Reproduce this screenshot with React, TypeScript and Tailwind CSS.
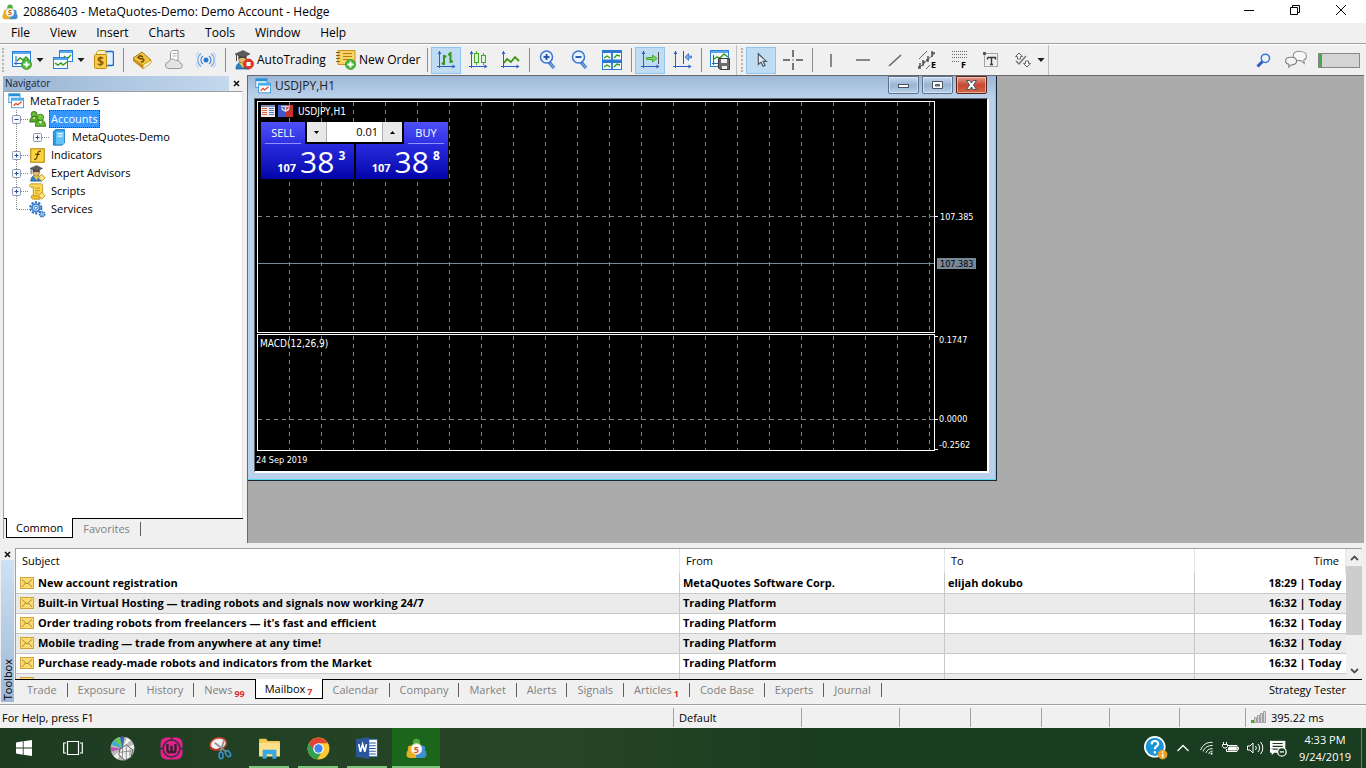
import { useState } from "react";
import type { ReactNode } from "react";
import clsx from "clsx";

const blue = "#2a5fc4";
const green = "#3a9a12";

function Svg({ size = 20, children }: { size?: number; children: ReactNode }) {
  return (
    <svg width={size} height={size} viewBox="0 0 20 20" fill="none" className="shrink-0" aria-hidden="true">
      {children}
    </svg>
  );
}

/* ---------- shared artwork ---------- */

function LogoIcon({ size = 16 }: { size?: number }) {
  return (
    <Svg size={size}>
      <circle cx="10" cy="4" r="3.4" fill="#4cae3c" />
      <path d="M4 12C4 7 7 4.500 10 4.500S16 7 16 12" fill="#58b848" />
      <circle cx="4.500" cy="10" r="2.800" fill="#e8b020" />
      <path d="M.5 16c0-4 2-6 5-6s5 3 5 9H4c-2.500 0-3.500-1-3.500-3z" fill="#e8b020" />
      <circle cx="15.500" cy="10" r="2.800" fill="#3f8fd0" />
      <path d="M19.500 16c0-4-2-6-5-6s-5 3-5 9H16c2.500 0 3.500-1 3.500-3z" fill="#3f8fd0" />
      <circle cx="10" cy="10.500" r="5" fill="#fff" stroke="#e8dcc8" />
      <text x="10" y="14" textAnchor="middle" fontSize="9" fontWeight="700" fill="#d4541c">5</text>
    </Svg>
  );
}

function ChartWindowsIcon({ size = 16 }: { size?: number }) {
  return (
    <Svg size={size}>
      <rect x="1" y="1" width="14" height="11" fill="#eaf6ff" stroke="#2a90d8" />
      <rect x="1" y="1" width="14" height="3" fill="#2a90d8" />
      <rect x="4.500" y="6.500" width="15" height="12" fill="#fff" stroke="#2a90d8" />
      <rect x="4.500" y="6.500" width="15" height="3" fill="#42aef0" />
      <path d="M7 16l3-3 2 2 5-4" stroke="#e04a20" strokeWidth="1.600" />
    </Svg>
  );
}

function GraduateIcon({ size = 20, badge }: { size?: number; badge: "stop" | "diamond" }) {
  return (
    <Svg size={size}>
      <path d="M2 19c0-5 3-7 6.500-7s6.500 2 6.500 7z" fill="#2f7fc8" stroke="#1e5890" strokeWidth=".7" />
      <path d="M5 13l4 5 3-5z" fill="#e8c050" />
      <circle cx="8.500" cy="9" r="4" fill="#e8b868" stroke="#8a6020" strokeWidth=".5" />
      <path d="M4.500 5v4c2-1.500 6-1.500 8 0V5z" fill="#484848" />
      <path d="M1 4l8-3.500L16 4l-7 3.500z" fill="#5c5c5c" stroke="#333" strokeWidth=".5" />
      <path d="M2.500 5v6" stroke="#444" />
      {badge === "stop" ? (
        <>
          <circle cx="14.500" cy="14" r="5" fill="#e03a26" stroke="#a82010" strokeWidth=".6" />
          <rect x="12.500" y="12" width="4" height="4" fill="#fff" />
        </>
      ) : (
        <path d="M15 11l4 4-4 4-4-4z" fill="#ffe680" stroke="#b08a10" />
      )}
    </Svg>
  );
}

function MailIcon() {
  return (
    <svg width="14" height="12" viewBox="0 0 14 12" className="shrink-0" aria-hidden="true">
      <rect x=".5" y=".5" width="13" height="11" fill="#fbdc72" stroke="#d0a438" />
      <path d="M2 2.500l5 4.500 5-4.500M2 10l3.500-4M12 10L8.500 6" fill="none" stroke="#b08828" />
    </svg>
  );
}

const axes = (
  <>
    <path d="M3.500 1v17M1 16.500h18" stroke={blue} />
    <path d="M1.500 4l2-3 2 3zM16.500 14.500l3 2-3 2z" fill={blue} />
  </>
);

const plusBadge = (
  <>
    <circle cx="14.500" cy="14.500" r="5" fill="#4cb83c" stroke="#2c8820" strokeWidth=".7" />
    <path d="M14.500 11.500v6M11.500 14.500h6" stroke="#fff" strokeWidth="1.800" />
  </>
);

/* ---------- toolbar ---------- */

function Separator() {
  return (
    <div className="flex w-1.5 shrink-0 justify-center">
      <div className="h-6 w-px bg-[#8c8c8c]" />
    </div>
  );
}

function Grip() {
  return <div className="mx-0.5 h-6 w-0.5 shrink-0 border-l-2 border-dotted border-[#b4b4b4]" />;
}

function Caret() {
  return (
    <svg width="8" height="5" viewBox="0 0 8 5" className="shrink-0" aria-hidden="true">
      <path d="M.5 0h7L4 4z" fill="#1a1a1a" />
    </svg>
  );
}

type ToolProps = { label: string; active?: boolean; onClick?: () => void; children: ReactNode };

function Tool({ label, active, onClick, children }: ToolProps) {
  return (
    <button
      type="button"
      aria-label={label}
      aria-pressed={active}
      onClick={onClick}
      className={clsx(
        "mx-px flex h-[27px] w-[30px] shrink-0 items-center justify-center border",
        active ? "border-[#90c4ee] bg-[#c0dcf3]" : "border-transparent",
      )}
    >
      {children}
    </button>
  );
}

function DropTool({ label, children }: { label: string; children: ReactNode }) {
  return (
    <button type="button" aria-label={label} className="flex h-[27px] w-[41px] shrink-0 items-center gap-1 pl-1.5">
      {children}
      <Caret />
    </button>
  );
}

function Toolbar() {
  const [style, setStyle] = useState("bars");
  const [scroll, setScroll] = useState(true);

  return (
    <div className="flex h-[31px] shrink-0 items-center border-t border-white pr-1.5" role="toolbar" aria-label="Standard">
      <Grip />
      <DropTool label="New chart">
        <Svg>
          <rect x=".5" y="1.500" width="18" height="15" fill="#f4fbff" stroke="#2a80d8" />
          <path d="M1 3h17" stroke="#5aa8ec" strokeWidth="2" />
          <path d="M4 6v9M2 13.500h14" stroke={blue} />
          <path d="M5 11l3-3 3 2 3-3 3 3" stroke={green} strokeWidth="1.500" />
          {plusBadge}
        </Svg>
      </DropTool>
      <DropTool label="Profiles">
        <Svg>
          <rect x="6.500" y=".5" width="13" height="11" fill="#f4fbff" stroke="#2a80d8" />
          <path d="M7 2h12" stroke="#5aa8ec" strokeWidth="2" />
          <path d="M11 6l3 3 4-4" stroke={green} strokeWidth="1.500" />
          <rect x=".5" y="7.500" width="14" height="11" fill="#f4fbff" stroke="#2a80d8" />
          <path d="M1 9h13" stroke="#5aa8ec" strokeWidth="2" />
          <path d="M2 13l3 2 3-2 2 2 4-3" stroke={green} strokeWidth="1.500" />
        </Svg>
      </DropTool>
      <Tool label="Market watch">
        <Svg>
          <rect x="7.500" y="1.500" width="12" height="14" rx="1.500" fill="#dff0ff" stroke="#2468c8" strokeWidth="1.500" />
          <path d="M2.500 4.500V2.500l2-2h6l1.500 2v2" fill="#fff0b8" stroke="#c89820" />
          <rect x=".5" y="4.500" width="12" height="14" rx="1" fill="#f8cc48" stroke="#c08c10" />
          <text x="6.500" y="16" textAnchor="middle" fontSize="12" fontWeight="700" fill="#8a5c00">$</text>
        </Svg>
      </Tool>
      <Separator />
      <Tool label="Navigator">
        <Svg>
          <path d="M1 8l9-6 9 8-8 8z" fill="#f0c440" stroke="#a8780c" />
          <path d="M1 8l10 7v4L1 11z" fill="#c89018" />
          <path d="M11 15l8-5v3l-8 6z" fill="#fff4c4" stroke="#a8780c" strokeWidth=".6" />
          <path d="M8 5.500l-2 2 3 1.500c2-1 4 1 2 2.500L9 12M8 5.500l3 1.500" stroke="#6c4800" strokeWidth="1.400" />
        </Svg>
      </Tool>
      <Tool label="Virtual hosting">
        <Svg>
          <path d="M6.500 12V2.500l2-2h5.500V12" fill="#fff" stroke="#989898" />
          <path d="M8.500 3.500h4M8.500 6h4" stroke="#a8a8a8" />
          <path d="M4 18.500a3.300 3.300 0 01.5-6.500 4 4 0 017-1.500 3.500 3.500 0 014.500 2.500 2.800 2.800 0 010 5.500z" fill="#e4e4e4" stroke="#989898" />
        </Svg>
      </Tool>
      <Tool label="Signals">
        <Svg>
          <circle cx="10" cy="10" r="2.500" fill="#2e74d0" />
          <path d="M7 6a5 5 0 000 8M13 6a5 5 0 010 8" stroke="#4a8adc" strokeWidth="1.300" />
          <path d="M5 3.500a8.200 8.200 0 000 13M15 3.500a8.200 8.200 0 010 13" stroke="#78a8e4" strokeWidth="1.200" />
          <path d="M2.800 2a11 11 0 000 16M17.200 2a11 11 0 010 16" stroke="#a8c8ee" />
        </Svg>
      </Tool>
      <Separator />
      <button type="button" className="flex h-[27px] w-[103px] shrink-0 items-center gap-[3px] pl-1.5 whitespace-nowrap">
        <GraduateIcon badge="stop" />
        AutoTrading
      </button>
      <button type="button" className="flex h-[27px] w-[93px] shrink-0 items-center gap-[3px] pl-[5px] whitespace-nowrap">
        <Svg>
          <path d="M2 .5h17v14H2z" fill="#f8d468" stroke="#c8941c" />
          <path d="M7 3.500h9M7 6.500h9M7 9.500h6" stroke="#b07c10" />
          <path d="M0 2.500h4M0 5.500h4M0 8.500h4M0 11.500h4" stroke="#8c6410" />
          {plusBadge}
        </Svg>
        New Order
      </button>
      <Separator />
      <Tool label="Bar chart" active={style === "bars"} onClick={() => setStyle("bars")}>
        <Svg>
          {axes}
          <path d="M8 5v10M5.500 13.500H8M8 6.500h2.500M14.500 2v11M14.500 4.500H12M14.500 11.500H17" stroke="#36941a" strokeWidth="2" />
        </Svg>
      </Tool>
      <Tool label="Candlesticks" active={style === "candles"} onClick={() => setStyle("candles")}>
        <Svg>
          {axes}
          <path d="M8.500 1v14M15.500 3v12" stroke="#48a828" />
          <rect x="6.500" y="3.500" width="4" height="9" fill="#dff8d4" stroke="#48a828" />
          <rect x="13.500" y="5.500" width="4" height="7" fill="#dff8d4" stroke="#48a828" />
        </Svg>
      </Tool>
      <Tool label="Line chart" active={style === "line"} onClick={() => setStyle("line")}>
        <Svg>
          {axes}
          <path d="M4 13l3-4 4 3 4-5 4 4" stroke={green} strokeWidth="1.800" />
        </Svg>
      </Tool>
      <Separator />
      {["Zoom in", "Zoom out"].map((label) => (
        <Tool key={label} label={label}>
          <Svg>
            <path d="M11 12l5 6" stroke="#3a72c8" strokeWidth="3.400" />
            <path d="M12 13l4 5" stroke="#90b8ec" strokeWidth="1.200" />
            <circle cx="8.500" cy="7" r="6" fill="#eaf4ff" stroke="#3a76d0" strokeWidth="1.500" />
            <path d="M5.500 7h6" stroke="#1c4ca4" strokeWidth="1.800" />
            {label === "Zoom in" && <path d="M8.500 4v6" stroke="#1c4ca4" strokeWidth="1.800" />}
          </Svg>
        </Tool>
      ))}
      <Tool label="Tile windows">
        <Svg>
          <rect x=".5" y=".5" width="19" height="19" fill="#f4fbff" stroke="#2a78d0" />
          <path d="M10 1v18M1 10.500h18M1 2h18M1 12h18" stroke="#2a78d0" strokeWidth="1.800" />
          <path d="M2 8l3-2 3 2M12 8l3-3 3 1M2 17l3-2 3 2M12 17l3-3 3 1" stroke={green} strokeWidth="1.400" />
        </Svg>
      </Tool>
      <Separator />
      <Tool label="Auto scroll" active={scroll} onClick={() => setScroll(!scroll)}>
        <Svg>
          {axes}
          <path d="M18.500 2v12" stroke="#505050" />
          <path d="M6.500 7.500h6V5l4.500 3.500-4.500 3.500V9.500h-6z" fill="#7ad860" stroke="#36941a" strokeWidth=".8" />
        </Svg>
      </Tool>
      <Tool label="Chart shift">
        <Svg>
          {axes}
          <path d="M11.500 1v13" stroke="#505050" />
          <path d="M19.500 6h-3V3.500L13 7l3.500 3.500V8h3z" fill="#78b0f0" stroke={blue} strokeWidth=".7" />
        </Svg>
      </Tool>
      <Separator />
      <Tool label="Save template">
        <Svg>
          <rect x=".5" y=".5" width="18" height="16" fill="#f4fbff" stroke="#2a80d8" />
          <path d="M1 2h17" stroke="#5aa8ec" strokeWidth="2" />
          <path d="M3.500 5v10M2 13.500h8" stroke={blue} />
          <path d="M4 9l3-2 3 1 4-4 4 3" stroke={green} strokeWidth="1.500" />
          <path d="M8.500 8.500h11v11H10l-1.500-1.500z" fill="#6c6c6c" stroke="#3c3c3c" />
          <path d="M11 9h6v4h-6zM12 16h5v3h-5z" fill="#f0f0f0" />
        </Svg>
      </Tool>
      <div className="h-full w-px shrink-0 bg-[#c0c0c0]" />
      <div className="w-0.5" />
      <Grip />
      <Tool label="Cursor" active>
        <Svg size={18}>
          <path d="M7 3v12l3-2.500 2.300 4.500 2.200-1-2.200-4.500H16z" fill="#e8eef4" stroke="#505860" strokeWidth="1.300" />
        </Svg>
      </Tool>
      <Tool label="Crosshair">
        <Svg>
          <path d="M10 0v7M10 13v7M0 10h7M13 10h7M9.500 10h1" stroke="#4c4c4c" strokeWidth="1.500" />
        </Svg>
      </Tool>
      <Separator />
      <Tool label="Vertical line"><Svg><path d="M10 4v13" stroke="#585858" strokeWidth="1.400" /></Svg></Tool>
      <Tool label="Horizontal line"><Svg><path d="M3 10h14" stroke="#585858" strokeWidth="1.400" /></Svg></Tool>
      <Tool label="Trend line"><Svg><path d="M4 16L16 5" stroke="#686868" strokeWidth="1.600" /></Svg></Tool>
      <Tool label="Equidistant channel">
        <Svg>
          <path d="M2 9l8-8M1 19L18 3M9 19l4-4" stroke="#686868" />
          <path d="M3 13v6M1 17h2M6 10v6M6 12h2M11 6v6M9 10h2M15 1v6M15 3h3" stroke="#484848" strokeWidth="1.400" />
          <text x="14" y="18" fontSize="9" fontWeight="700" fill="#000">E</text>
        </Svg>
      </Tool>
      <Tool label="Fibonacci retracement">
        <Svg>
          <path d="M3 1.500h15M3 4.500h15M3 7.500h15M3 11.500h7" stroke="#686868" strokeDasharray="1 1" />
          <text x="12" y="18" fontSize="9" fontWeight="700" fill="#000">F</text>
        </Svg>
      </Tool>
      <Tool label="Text">
        <Svg>
          <path d="M3.500 3.500h13v13h-13z" stroke="#585858" strokeDasharray="1 1" />
          <path d="M2 2h3v3H2z" fill="#585858" />
          <path d="M6.500 7.500h8v2M6.500 7.500v2M10.500 7.500V15M9 14.500h3" stroke="#383838" strokeWidth="1.400" />
        </Svg>
      </Tool>
      <DropTool label="Objects">
        <Svg>
          <path d="M6 3l3.500 3.500h-2V9h-3V6.500h-2zM14 17l3.500-3.500h-2V11h-3v2.500h-2z" fill="#fff" stroke="#686868" />
          <path d="M3 11l3 3 7-8" stroke="#787878" strokeWidth="1.500" />
        </Svg>
      </DropTool>
      <div className="h-full w-px shrink-0 bg-[#c0c0c0]" />

      <div className="ml-auto flex items-center">
        <button type="button" aria-label="Search" className="mr-3.5">
          <Svg size={15}>
            <path d="M9 11l-7 7" stroke="#2f5cc0" strokeWidth="4" />
            <circle cx="12.500" cy="7" r="5.500" fill="#eef5ff" stroke="#3f74dc" strokeWidth="2" />
          </Svg>
        </button>
        <button type="button" aria-label="Community chat" className="mr-[11px]">
          <Svg size={22}>
            <path d="M13 2c4 0 6.500 2 6.500 4.500 0 2-1 3-2.500 3.500l.5 3-3-2.500C9 11 7.500 9 7.500 6.500S9.500 2 13 2z" fill="#f8f8f8" stroke="#909090" />
            <path d="M5.500 7.500c3 0 5 1.500 5 3.500s-2 3.500-5 3.500l-2 2v-2.500C1.500 13.500.5 12.500.5 11c0-2 2-3.500 5-3.500z" fill="#f4f4f4" stroke="#808080" />
          </Svg>
        </button>
        <div className="h-[15px] w-[42px] border border-[#888] bg-[#d4d4d4]">
          <div className="h-full w-[3px] bg-[#3fae49]" />
        </div>
      </div>
    </div>
  );
}

/* ---------- navigator ---------- */

function Branch({ box, last, sub }: { box?: "+" | "-"; last?: boolean; sub?: boolean }) {
  return (
    <svg width="20" height="18" viewBox="0 0 20 18" className="shrink-0" aria-hidden="true">
      {!sub && <path d={last ? "M8.500 0v9" : "M8.500 0v18"} stroke="#888" strokeDasharray="1 1" />}
      <path d="M9 9.500h11" stroke="#888" strokeDasharray="1 1" />
      {box && (
        <>
          <rect x="4.500" y="5.500" width="8" height="8" rx="1" fill="#f6f8fc" stroke="#8c98b0" />
          <path d={box === "+" ? "M6.500 9.500h4M8.500 7.500v4" : "M6.500 9.500h4"} stroke="#2c4c90" />
        </>
      )}
    </svg>
  );
}

function AccountsIcon() {
  return (
    <Svg size={17}>
      <circle cx="6" cy="4" r="3.500" fill="#68b838" stroke="#2c7410" />
      <path d="M1 13c0-5 2-6.500 5-6.500S11 8 11 13z" fill="#58a828" stroke="#2c7410" />
      <circle cx="13.500" cy="7.500" r="3.700" fill="#78cc40" stroke="#2c7410" />
      <path d="M7.500 18c0-6 2.500-7 6-7s6 1 6 7z" fill="#60b82c" stroke="#2c7410" />
      <path d="M11.500 12l2 3 2-3zM4.500 7.500L6 10l1.500-2.500z" fill="#fff" />
    </Svg>
  );
}

function ServerIcon() {
  return (
    <Svg size={17}>
      <path d="M4 3l3-2.500h10v16L14 19H4z" fill="#2a9ce0" stroke="#1878b8" />
      <path d="M7 3h9.500v15L7 18z" fill="#60c4f8" />
      <path d="M9 5.500h6M9 8.500h6" stroke="#e8f8ff" strokeWidth="1.500" />
    </Svg>
  );
}

function IndicatorIcon() {
  return (
    <Svg size={15}>
      <rect x="1" y="1" width="18" height="18" fill="#fcd440" stroke="#b88c10" strokeWidth="1.500" />
      <path d="M14.500 4.500c-3-1.500-4 1-4.500 4s-1 8-4.500 6.500M7 8.500h6" stroke="#5c4400" strokeWidth="1.600" />
    </Svg>
  );
}

function ScriptIcon() {
  return (
    <Svg size={17}>
      <path d="M2 1h12c2 0 2 1 2 3v12H5V5H2c-1.500-1-1.500-3 0-4z" fill="#fcd858" stroke="#b88c10" />
      <path d="M7 6h6M7 9h6M7 12h4" stroke="#b88c10" />
      <path d="M3 15h10v4H5c-2 0-3-2-2-4z" fill="#f4c030" stroke="#b88c10" />
      <path d="M15 11l4 4-4 4-4-4z" fill="#ffe680" stroke="#b08a10" />
    </Svg>
  );
}

function ServicesIcon() {
  return (
    <Svg size={17}>
      <circle cx="8" cy="8" r="6.500" stroke="#2f6fc0" strokeWidth="2.500" strokeDasharray="2.500 1.600" />
      <circle cx="8" cy="8" r="4.500" fill="#b8d8f8" stroke="#3f80d0" strokeWidth="2" />
      <circle cx="8" cy="8" r="1.800" fill="#fff" stroke="#2f6fc0" />
      <circle cx="15.500" cy="15.500" r="3" fill="#8cc0f0" stroke="#2f6fc0" strokeWidth="2" strokeDasharray="1.600 1" />
    </Svg>
  );
}

const tree: { name: string; box?: "+" | "-"; last?: boolean; sub?: boolean; icon: ReactNode }[] = [
  { name: "Accounts", box: "-", icon: <AccountsIcon /> },
  { name: "MetaQuotes-Demo", box: "+", sub: true, icon: <ServerIcon /> },
  { name: "Indicators", box: "+", icon: <IndicatorIcon /> },
  { name: "Expert Advisors", box: "+", icon: <GraduateIcon size={17} badge="diamond" /> },
  { name: "Scripts", box: "+", icon: <ScriptIcon /> },
  { name: "Services", last: true, icon: <ServicesIcon /> },
];

function CloseX() {
  return (
    <svg width="7" height="7" viewBox="0 0 7 7" aria-hidden="true">
      <path d="M1 1l5 5M6 1L1 6" stroke="#111" strokeWidth="1.600" />
    </svg>
  );
}

function Navigator() {
  const [selected, setSelected] = useState("Accounts");

  return (
    <aside className="flex w-[247px] shrink-0 flex-col pt-px pr-1 pb-1 pl-[3px] text-[11px]">
      <div className="flex h-[15px] items-center">
        <h2 className="h-full flex-1 bg-linear-to-r from-[#98b4d2] to-[#c4d8ee] pl-0.5 text-[10px] leading-[14px] text-[#14243c]">
          Navigator
        </h2>
        <button type="button" aria-label="Close Navigator" className="flex w-3.5 justify-center">
          <CloseX />
        </button>
      </div>
      <div className="flex-1 border border-b-0 border-[#a0a0a0] border-r-[#e4e4e4] bg-white">
        <div className="flex h-[18px] items-center gap-1.5 pl-1">
          <ChartWindowsIcon />
          MetaTrader 5
        </div>
        <ul>
          {tree.map((node) => (
            <li key={node.name} className="flex h-[18px] items-center pl-1">
              {node.sub && (
                <svg width="21" height="18" viewBox="0 0 21 18" className="shrink-0" aria-hidden="true">
                  <path d="M8.500 0v18" stroke="#888" strokeDasharray="1 1" />
                </svg>
              )}
              <Branch box={node.box} last={node.last} sub={node.sub} />
              <span className="flex w-[18px] shrink-0 justify-center">{node.icon}</span>
              <button
                type="button"
                onClick={() => setSelected(node.name)}
                className={clsx(
                  "ml-[3px] h-[18px] border border-dotted px-px leading-4",
                  node.name === selected ? "border-[#6a3a00] bg-[#3397fd] text-white" : "border-transparent",
                )}
              >
                {node.name}
              </button>
            </li>
          ))}
        </ul>
      </div>
      <div className="flex h-[21px] border-l border-[#a0a0a0]">
        <div className="w-0.5 border-t border-black" />
        <button type="button" className="h-5 border border-t-0 border-black bg-white px-[9px] leading-[18px]">
          Common
        </button>
        <div className="flex flex-1 items-center border-t border-black text-[#808080]">
          <button type="button" className="px-2.5 leading-[18px]">Favorites</button>
          <div className="h-3.5 w-px bg-[#606060]" />
        </div>
      </div>
    </aside>
  );
}

/* ---------- chart window ---------- */

const gridColumns = Array.from({ length: 21 }, (_, i) => 34 + i * 32);

function PriceChart() {
  return (
    <svg
      width="732"
      height="372"
      viewBox="0 0 732 372"
      className="block font-['DejaVu_Sans_Condensed','DejaVu_Sans',sans-serif]"
      fontSize="9"
      fill="#fff"
      shapeRendering="crispEdges"
    >
      <rect width="732" height="372" fill="#000" />
      <g stroke="#79828c" strokeDasharray="4 4">
        {gridColumns.map((x) => (
          <path key={x} d={`M${x + 0.5} 3v230M${x + 0.5} 237v114`} />
        ))}
        <path d="M3 117.500h676M3 320.500h676" />
      </g>
      <path d="M3 164.500h676" stroke="#778899" />
      <g fill="none" stroke="#fff">
        <rect x="2.500" y="2.500" width="677" height="231" />
        <rect x="2.500" y="235.500" width="677" height="116" />
        <path d="M680 117.500h3M680 237.500h3M680 320.500h3M680 350.500h3" />
      </g>
      <rect x="682" y="159" width="39" height="11" fill="#778899" />
      <text x="43" y="16" fontSize="10">USDJPY,H1</text>
      <text x="5" y="248" fontSize="10">MACD(12,26,9)</text>
      <text x="1" y="364">24 Sep 2019</text>
      <text x="685" y="121">107.385</text>
      <text x="685" y="168" fill="#000">107.383</text>
      <text x="684" y="244">0.1747</text>
      <text x="684" y="323">0.0000</text>
      <text x="684" y="349">-0.2562</text>
    </svg>
  );
}

function Quote({ pip }: { pip: string }) {
  return (
    <button
      type="button"
      className="flex h-[35px] flex-1 items-end justify-center gap-1 bg-linear-to-b from-[#2a2ae0] to-[#0202a8] pb-px pl-2 text-white"
    >
      <span className="text-[11px] leading-5 font-bold">107</span>
      <span className="text-[30px] leading-8">38</span>
      <span className="self-start pt-1 text-xs leading-4 font-bold">{pip}</span>
    </button>
  );
}

function OneClickPanel() {
  const [volume, setVolume] = useState("0.01");
  const step = (d: number) => setVolume(Math.max(0.01, Number(volume) + d).toFixed(2));

  return (
    <div className="absolute top-1.5 left-1.5 w-[187px]">
      <div className="flex h-[17px] items-start gap-[3px]">
        <svg width="14" height="12" viewBox="0 0 14 12" aria-hidden="true">
          <rect width="14" height="12" fill="#f4ece8" />
          <path d="M0 1h14" stroke="#7c8cc0" strokeWidth="2" />
          <path d="M1 3.500h5M1 5.500h5M1 7.500h5M1 9.500h5" stroke="#d86850" />
          <path d="M8 3.500h5M8 5.500h5M8 7.500h5M8 9.500h5" stroke="#5878d0" />
        </svg>
        <svg width="15" height="12" viewBox="0 0 15 12" aria-hidden="true">
          <rect width="7" height="12" fill="#3c58d0" />
          <rect x="7" width="8" height="12" fill="#c83030" />
          <path d="M3 1.500h9M7.500 1v6M4 3c0 3 6 4 7 0" stroke="#d8d8d8" strokeWidth="1.400" fill="none" />
        </svg>
      </div>
      <div className="flex h-[22px] justify-between bg-black">
        <button type="button" className="w-11 bg-linear-to-b from-[#5050f8] to-[#2e2ee2] px-1 text-white">
          <span className="block h-[21px] border-b border-[#9090ff] text-[11px] leading-5">SELL</span>
        </button>
        <div className="flex h-5 w-[95px] bg-[#e8e8e8]">
          <button type="button" aria-label="Decrease volume" onClick={() => step(-0.01)} className="flex w-5 items-center justify-center border-r border-[#b0b0b0]">
            <svg width="5" height="3" viewBox="0 0 5 3" aria-hidden="true"><path d="M0 0h5L2.500 3z" fill="#000" /></svg>
          </button>
          <input
            aria-label="Volume"
            value={volume}
            onChange={(e) => setVolume(e.target.value)}
            className="min-w-0 flex-1 bg-white pr-1 text-right text-[11px] outline-none"
          />
          <button type="button" aria-label="Increase volume" onClick={() => step(0.01)} className="flex w-5 items-center justify-center border-l border-[#b0b0b0]">
            <svg width="5" height="3" viewBox="0 0 5 3" aria-hidden="true"><path d="M0 3h5L2.500 0z" fill="#000" /></svg>
          </button>
        </div>
        <button type="button" className="w-11 bg-linear-to-b from-[#5050f8] to-[#2e2ee2] px-1 text-white">
          <span className="block h-[21px] border-b border-[#9090ff] text-[11px] leading-5">BUY</span>
        </button>
      </div>
      <div className="flex gap-0.5 bg-black">
        <Quote pip="3" />
        <Quote pip="8" />
      </div>
    </div>
  );
}

function WindowButton({ label, danger, children }: { label: string; danger?: boolean; children: ReactNode }) {
  return (
    <button
      type="button"
      aria-label={label}
      className={clsx(
        "flex h-[18px] w-[31px] items-center justify-center rounded-b-xs border shadow-[inset_0_0_0_1px_rgba(255,255,255,0.45)]",
        danger
          ? "border-[#5c2418] bg-linear-to-b from-[#e09888] via-[#c84830] to-[#d06848]"
          : "border-[#5c708c] bg-linear-to-b from-[#c8daee] via-[#98b4d4] to-[#b8d0e8]",
      )}
    >
      <svg width="13" height="10" viewBox="0 0 13 10" fill="#fff" stroke="#48525e" aria-hidden="true">
        {children}
      </svg>
    </button>
  );
}

function ChartWindow() {
  return (
    <section className="w-[749px] border-r border-b border-[#182838] bg-[#b9d1ea]">
      <div className="border-r border-b border-[#50d8f0] px-1.5 pb-1.5">
        <header className="-mx-1.5 flex h-[22px] items-start bg-linear-to-b from-[#9db8d6] to-[#bbd2eb] pr-2 pl-[7px]">
          <div className="flex h-5 items-center gap-1 text-[#202020]">
            <ChartWindowsIcon />
            USDJPY,H1
          </div>
          <div className="ml-auto flex gap-[3px]">
            <WindowButton label="Minimize chart"><rect x="1.500" y="4.500" width="10" height="3" /></WindowButton>
            <WindowButton label="Maximize chart">
              <path d="M1.500 1.500h10v7h-10zM4.500 4.500v1.500h4V4.500z" fillRule="evenodd" />
            </WindowButton>
            <WindowButton label="Close chart" danger>
              <path d="M1.500.5h3l2 2.500 2-2.500h3L8.500 5l3 4.500h-3l-2-2.500-2 2.500h-3l3-4.500z" />
            </WindowButton>
          </div>
        </header>
        <div className="relative border border-r-2 border-b-2 border-t-[#606870] border-r-white border-b-white border-l-[#606870] bg-black">
          <PriceChart />
          <OneClickPanel />
        </div>
      </div>
    </section>
  );
}

/* ---------- toolbox ---------- */

const mails = [
  ["New account registration", "MetaQuotes Software Corp.", "elijah dokubo", "18:29 | Today"],
  ["Built-in Virtual Hosting — trading robots and signals now working 24/7", "Trading Platform", "", "16:32 | Today"],
  ["Order trading robots from freelancers — it's fast and efficient", "Trading Platform", "", "16:32 | Today"],
  ["Mobile trading — trade from anywhere at any time!", "Trading Platform", "", "16:32 | Today"],
  ["Purchase ready-made robots and indicators from the Market", "Trading Platform", "", "16:32 | Today"],
  ["Trading Signals and copy trading", "Trading Platform", "", "16:32 | Today"],
];

const tabs = [
  { name: "Trade" },
  { name: "Exposure" },
  { name: "History" },
  { name: "News", count: "99" },
  { name: "Mailbox", count: "7" },
  { name: "Calendar" },
  { name: "Company" },
  { name: "Market" },
  { name: "Alerts" },
  { name: "Signals" },
  { name: "Articles", count: "1" },
  { name: "Code Base" },
  { name: "Experts" },
  { name: "Journal" },
];

function Toolbox() {
  const [current, setCurrent] = useState("Mailbox");

  return (
    <section className="flex h-[162px] shrink-0 border-b border-[#a0a0a0] pt-[5px] pr-1 pb-0.5 text-[11px]">
      <div className="flex w-[15px] flex-col items-center">
        <button type="button" aria-label="Close Toolbox" className="flex h-3 items-center">
          <CloseX />
        </button>
        <div className="flex w-[13px] flex-1 items-end justify-center bg-linear-to-b from-[#cfe1f4] to-[#9db8d6] pb-0.5">
          <h2 className="rotate-180 text-[11px] leading-3 [writing-mode:vertical-rl]">Toolbox</h2>
        </div>
      </div>
      <div className="flex min-w-0 flex-1 flex-col">
        <div className="flex min-h-0 flex-1 overflow-hidden border-t border-l border-[#a0a0a0] bg-white">
          <table className="w-full table-fixed self-start">
            <colgroup>
              <col />
              <col className="w-[265px]" />
              <col className="w-[250px]" />
              <col className="w-[151px]" />
            </colgroup>
            <thead>
              <tr className="h-6 text-left *:border-r *:border-[#e4e4e4] *:px-1.5 *:font-normal">
                <th>Subject</th>
                <th>From</th>
                <th>To</th>
                <th className="text-right">Time</th>
              </tr>
            </thead>
            <tbody className="font-bold">
              {mails.map(([subject, from, to, time], i) => (
                <tr key={i} className="h-5 border-b border-[#c8c8c8] whitespace-nowrap even:bg-[#ebebeb] *:p-0 *:leading-[18px]">
                  <td className="border-r border-[#c8c8c8]">
                    <div className="flex items-center gap-1 pl-1">
                      <MailIcon />
                      {subject}
                    </div>
                  </td>
                  <td className="border-r border-[#c8c8c8]"><div className="pl-[3px]">{from}</div></td>
                  <td className="border-r border-[#c8c8c8]"><div className="pl-[3px]">{to}</div></td>
                  <td className="text-right"><div className="pr-1">{time}</div></td>
                </tr>
              ))}
            </tbody>
          </table>
          <div className="flex w-4 shrink-0 flex-col bg-[#f0f0f0]">
            <button type="button" aria-label="Scroll up" className="flex h-[17px] items-center justify-center">
              <svg width="9" height="6" viewBox="0 0 9 6" aria-hidden="true"><path d="M1 5l3.500-3.500L8 5" fill="none" stroke="#505050" strokeWidth="1.800" /></svg>
            </button>
            <div className="h-[69px] bg-[#cdcdcd]" />
            <button type="button" aria-label="Scroll down" className="mt-auto flex h-[17px] items-center justify-center">
              <svg width="9" height="6" viewBox="0 0 9 6" aria-hidden="true"><path d="M1 1l3.500 3.500L8 1" fill="none" stroke="#505050" strokeWidth="1.800" /></svg>
            </button>
          </div>
        </div>
        <div className="flex h-[23px] shrink-0">
          <div className="w-0.5 border-t border-black" />
          {tabs.map((tab, i) => {
            const active = tab.name === current;
            const beforeActive = tabs[i + 1]?.name === current;
            return (
              <div key={tab.name} className={clsx("flex", active ? "h-5" : "h-[21px] items-center border-t border-black")}>
                <button
                  type="button"
                  onClick={() => setCurrent(tab.name)}
                  className={clsx(
                    "flex h-5 items-center leading-4",
                    active ? "border-x border-b border-black bg-white px-[9px]" : "px-2.5 text-[#808080]",
                  )}
                >
                  {tab.name}
                  {tab.count && <span className="ml-0.5 self-end text-[9px] leading-3 font-bold text-[#e03030]">{tab.count}</span>}
                </button>
                {!active && !beforeActive && <div className="h-3.5 w-px bg-[#606060]" />}
              </div>
            );
          })}
          <div className="flex flex-1 items-start justify-end border-t border-black pr-4">
            <button type="button" className="leading-5">Strategy Tester</button>
          </div>
        </div>
      </div>
    </section>
  );
}

function StatusBar() {
  return (
    <footer className="flex h-[23px] shrink-0 items-center border-t border-white text-[11px] *:h-[19px] *:leading-[19px]">
      <div className="flex-1 pl-0.5">For Help, press F1</div>
      <div className="w-32 border-l border-[#a0a0a0] pl-[5px]">Default</div>
      <div className="w-[98px] border-l border-[#a0a0a0]" />
      <div className="w-[71px] border-l border-[#a0a0a0]" />
      <div className="w-[71px] border-l border-[#a0a0a0]" />
      <div className="w-[68px] border-l border-[#a0a0a0]" />
      <div className="w-[70px] border-l border-[#a0a0a0]" />
      <div className="w-[66px] border-l border-[#a0a0a0]" />
      <div className="flex w-[121px] items-center gap-1 border-l border-[#a0a0a0] pl-[5px]">
        <svg width="16" height="12" viewBox="0 0 16 12" fill="#d8d8d8" stroke="#a0a0a0" aria-hidden="true">
          <path d="M3.500 6.500h2v5h-2zM6.500 4.500h2v7h-2zM9.500 2.500h2v9h-2zM12.500.5h2v11h-2z" />
          <path d="M.5 9.500h2v2h-2z" fill="#8cd870" stroke="#2c9c10" />
        </svg>
        395.22 ms
      </div>
    </footer>
  );
}

/* ---------- desktop taskbar ---------- */

const pinned: { name: string; open?: boolean; active?: boolean; icon: ReactNode }[] = [
  {
    name: "Start",
    icon: <Svg size={16}><path d="M0 3l8.500-1.300v7.800H0zM9.500 1.500L20 0v9.500H9.500zM0 10.500h8.500v7.800L0 17zM9.500 10.500H20V20l-10.500-1.500z" fill="#fff" /></Svg>,
  },
  {
    name: "Task View",
    icon: <Svg><path d="M4.500 3.500h11v13h-11zM3 5H.7v10H3M17 5h2.300v10H17" stroke="#fff" strokeWidth="1.200" /></Svg>,
  },
  {
    name: "Disc Utility",
    icon: (
      <Svg size={25}>
        <circle cx="10" cy="10" r="9.500" fill="#b8b8b8" />
        <path d="M10 10L1 7A9 9 0 014 3z" fill="#3cb0c8" />
        <path d="M10 10L4 3a9 9 0 014-2.300z" fill="#68c848" />
        <path d="M10 10L8 .7a9 9 0 013.500 0z" fill="#3860c0" />
        <path d="M10 10L.7 9v3.500z" fill="#c050b0" />
        <path d="M10 10l3.500-8.800 3 2zM10 10l9-3 .5 3z" fill="#f4f4f4" />
        <path d="M10 10l-7 6 3 2.500z" fill="#f0f0f0" />
        <path d="M8 10.500l5-3.500 5 4-1 6-5 2.500-5-4.500z" fill="#f0f0f0" stroke="#484848" strokeWidth=".7" />
        <path d="M10 9.500v7.500M13 8v10.500M16 10.500v6M8 13l9-1" stroke="#909090" strokeWidth=".8" />
      </Svg>
    ),
  },
  {
    name: "WampServer",
    icon: (
      <Svg size={23}>
        <rect x=".5" y=".5" width="19" height="19" rx="5" fill="#e0218c" />
        <circle cx="10" cy="10" r="7.300" stroke="#34303a" strokeWidth="1.300" />
        <path d="M0 10h3M17 10h3M10 0v3" stroke="#34303a" strokeWidth="1.300" />
        <path d="M6.500 6v5c0 3 3.500 3 3.500 0V7.500M10 11c0 3 3.500 3 3.500 0V6" stroke="#34202c" strokeWidth="2" />
      </Svg>
    ),
  },
  {
    name: "Snipping Tool",
    icon: (
      <Svg size={23}>
        <ellipse cx="8" cy="6" rx="7" ry="5" fill="#f4f4f4" stroke="#d84838" strokeWidth="1.300" transform="rotate(-15 8 6)" />
        <path d="M1.500 9c1 2.500 6 3 9 .5" stroke="#b83828" strokeWidth="1.500" />
        <path d="M5 5l10 8M13 3l-3 10" stroke="#909090" strokeWidth="1.500" />
        <ellipse cx="10.500" cy="16" rx="1.800" ry="2.800" stroke="#3a90c8" strokeWidth="1.400" />
        <ellipse cx="16.500" cy="14.500" rx="1.800" ry="2.800" stroke="#3a90c8" strokeWidth="1.400" transform="rotate(-35 16.500 14.500)" />
      </Svg>
    ),
  },
  {
    name: "File Explorer",
    open: true,
    icon: (
      <Svg size={23}>
        <path d="M1 1.500h6l1.500 2H19v13H1z" fill="#f4c850" />
        <path d="M1 5h18v12H1z" fill="#fce08c" />
        <path d="M4 11h12v8h-3.500v-4h-5v4H4z" fill="#38a8e0" />
      </Svg>
    ),
  },
  {
    name: "Chrome",
    open: true,
    icon: (
      <Svg size={23}>
        <circle cx="10" cy="10" r="9.500" fill="#fcc934" />
        <path d="M10 10L1.800 5.200A9.500 9.500 0 009 19.450L13.500 12z" fill="#34a052" />
        <path d="M6 12L1.800 5.200A9.500 9.500 0 0118.300 5.500H10z" fill="#e04434" />
        <circle cx="10" cy="10" r="4.600" fill="#fff" />
        <circle cx="10" cy="10" r="3.600" fill="#4384f0" />
      </Svg>
    ),
  },
  {
    name: "Word",
    open: true,
    icon: (
      <Svg size={22}>
        <path d="M10 2h9.500v16H10z" fill="#fff" stroke="#2c5ca8" />
        <path d="M12 5.500h6M12 8h6M12 10.500h6M12 13h6M12 15.500h6" stroke="#2c5ca8" />
        <path d="M0 2l12-2v20L0 18z" fill="#2b579a" />
        <path d="M2.500 6.500l1.500 7 2-7 2 7 1.500-7" stroke="#fff" strokeWidth="1.500" />
      </Svg>
    ),
  },
  { name: "MetaTrader 5", open: true, active: true, icon: <LogoIcon size={21} /> },
];

function Taskbar() {
  return (
    <nav className="flex h-10 shrink-0 items-center bg-linear-to-r from-[#1d3b21] via-[#284626] via-40% to-[#1a3c20] to-60% text-[11px] text-white">
      <div className="flex h-full gap-px">
        {pinned.map((app) => (
          <button
            key={app.name}
            type="button"
            aria-label={app.name}
            className={clsx("flex h-full w-12 flex-col items-center", app.active && "bg-[#1c661c]")}
          >
            <span className="flex flex-1 items-center pt-0.5">{app.icon}</span>
            <span className={clsx("h-0.5", app.active ? "w-full" : "w-10", app.open && "bg-[#7cc47c]")} />
          </button>
        ))}
      </div>
      <div className="ml-auto flex h-full items-center">
        <button type="button" aria-label="Help">
          <Svg size={24}>
            <circle cx="9" cy="9" r="8.300" fill="#1c94d8" stroke="#fff" strokeWidth="1.400" />
            <path d="M6.300 7c.2-4 5.700-3.500 5.500-.3C11.600 8.500 9 8.800 9 11M9 12.800v1.700" stroke="#fff" strokeWidth="1.800" />
            <circle cx="15.500" cy="15.500" r="4" fill="#eca028" />
            <path d="M15.500 12.800v1.200M15.500 15v3" stroke="#fff" strokeWidth="1.300" />
          </Svg>
        </button>
        <button type="button" aria-label="Show hidden icons" className="ml-2">
          <svg width="14" height="8" viewBox="0 0 14 8" aria-hidden="true"><path d="M1.500 7L7 1.500 12.500 7" fill="none" stroke="#fff" strokeWidth="1.300" /></svg>
        </button>
        <button type="button" aria-label="Network" className="ml-2.5">
          <Svg size={14}>
            <path d="M1 13C3 6 10 1 18 2M4.500 15C6 9.500 11.500 6 18 6.500M8.500 17c1-4 5-6.500 9.500-6M12.500 18.500c.5-2.500 3-4 5.500-4" stroke="#fff" strokeWidth="1.400" />
            <circle cx="16.500" cy="18" r="1.500" fill="#fff" />
          </Svg>
        </button>
        <button type="button" aria-label="Battery" className="ml-2">
          <svg width="17" height="14" viewBox="0 0 17 14" fill="none" stroke="#fff" aria-hidden="true">
            <path d="M6 4.500h9v6H4.500V8M15 6.500h1.500v2H15M1.500 1v2.500M4.500 1v2.500M.5 3.500h5v2L4 7H2L.5 5.500z" />
            <path d="M7 6h7v3H6z" fill="#fff" />
          </svg>
        </button>
        <button type="button" aria-label="Volume" className="ml-2">
          <svg width="17" height="14" viewBox="0 0 17 14" fill="none" stroke="#fff" aria-hidden="true">
            <path d="M.5 5H3l3-3v10L3 9H.5zM8.500 5a3 3 0 010 4M11 3a6 6 0 010 8M13.500 1a9 9 0 010 12" />
          </svg>
        </button>
        <button type="button" aria-label="Notifications" className="ml-1.5">
          <Svg size={17}>
            <path d="M0 1h18v9H0z" fill="#fff" />
            <path d="M0 10h9v5H5l-3 3v-3H0z" fill="#fff" />
            <path d="M3 4h12M3 7.500h12M3 11h6" stroke="#1a3c20" strokeWidth="1.200" />
            <circle cx="14" cy="14" r="5" fill="#1a3c20" stroke="#fff" strokeWidth="1.500" />
            <path d="M11.500 14h5" stroke="#fff" strokeWidth="1.500" />
          </Svg>
        </button>
        <div className="flex w-[74px] flex-col items-center pl-0.5 leading-[17px]">
          <span>4:33 PM</span>
          <span>9/24/2019</span>
        </div>
        <div className="h-full w-px bg-[#70806c]" />
        <div className="w-1" />
      </div>
    </nav>
  );
}

/* ---------- page ---------- */

const menus = ["File", "View", "Insert", "Charts", "Tools", "Window", "Help"];

export default function App() {
  return (
    <div className="flex h-screen flex-col overflow-hidden bg-[#f0f0f0] font-['Open_Sans','Noto_Sans',sans-serif] text-xs text-black">
      <header className="flex h-[23px] shrink-0 items-center bg-white pr-0.5 pl-0.5">
        <LogoIcon />
        <h1 className="ml-[5px]">20886403 - MetaQuotes-Demo: Demo Account - Hedge</h1>
        <div className="ml-auto flex h-full pb-1 *:flex *:w-[46px] *:items-center *:justify-center">
          <button type="button" aria-label="Minimize">
            <svg width="10" height="10" viewBox="0 0 10 10" aria-hidden="true"><path d="M0 5.500h10" stroke="#000" /></svg>
          </button>
          <button type="button" aria-label="Restore">
            <svg width="10" height="10" viewBox="0 0 10 10" fill="none" stroke="#000" aria-hidden="true"><path d="M.5 2.500h7v7h-7zM2.500 2.500v-2h7v7h-2" /></svg>
          </button>
          <button type="button" aria-label="Close">
            <svg width="10" height="10" viewBox="0 0 10 10" aria-hidden="true"><path d="M0 0l10 10M10 0L0 10" stroke="#000" /></svg>
          </button>
        </div>
      </header>
      <nav className="flex h-[21px] shrink-0 items-center border-b border-[#a0a0a0] pl-px">
        {menus.map((m) => (
          <button key={m} type="button" className="px-2.5 leading-5">{m}</button>
        ))}
      </nav>
      <Toolbar />
      <div className="flex min-h-0 flex-1">
        <Navigator />
        <main className="mr-0.5 min-w-0 flex-1 overflow-hidden border-t border-l border-[#696969] bg-[#ababab]">
          <ChartWindow />
        </main>
      </div>
      <Toolbox />
      <StatusBar />
      <Taskbar />
    </div>
  );
}
